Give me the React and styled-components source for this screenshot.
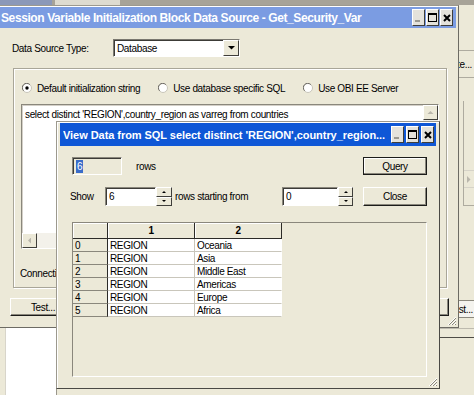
import React from 'react'
import styled, { createGlobalStyle } from 'styled-components'

const GlobalStyle = createGlobalStyle`
  html, body { margin: 0; padding: 0; }
  body {
    width: 474px;
    height: 395px;
    overflow: hidden;
    background: #ece9d8;
    font-family: "Liberation Sans", Arial, sans-serif;
    font-size: 10px;
    letter-spacing: -0.35px;
    color: #000;
  }
`

const Desktop = styled.div`
  position: relative;
  width: 474px;
  height: 395px;
  overflow: hidden;
  background: #ece9d8;
  display: flex;
  flex-direction: column;
`

/* ---------- background application ---------- */
const TopStrip = styled.div`
  flex: none;
  height: 5px;
  display: flex;
  gap: 3px;
  background: #a7a398;
`
const StripTab = styled.div`
  width: ${p => p.$w}px;
  background: ${p => p.$bg};
`
const BackBody = styled.div`
  flex: none;
  height: 323px;
  display: flex;
`
const Filler = styled.div`
  flex: 1;
`
const SidePanel = styled.div`
  width: 80px;
  display: flex;
  flex-direction: column;
`
const SideSection = styled.div`
  margin-top: 45px;
  height: 28px;
  box-sizing: border-box;
  border-top: 1px solid #aeab9f;
  border-bottom: 1px solid #aeab9f;
  padding-top: 7px;
  display: flex;
  justify-content: flex-end;
`
const SideText = styled.span`
  margin-right: 2px;
  line-height: 14px;
`
const SideList = styled.div`
  margin: 23px 0 0 69px;
  height: 105px;
  box-sizing: border-box;
  border-left: 1px solid #aeab9f;
  border-bottom: 1px solid #aeab9f;
  display: flex;
  flex-direction: column;
  justify-content: flex-end;
  padding-bottom: 17px;
`
const SideScroll = styled.div`
  height: 16px;
  border-top: 1px solid #d6d3c8;
  border-bottom: 1px solid #d6d3c8;
  display: flex;
  align-items: center;
  padding-left: 3px;
`
const SideButton = styled.div`
  margin: 94px 0 0 28px;
  height: 16px;
  border: 1px solid #8c897e;
  border-right: none;
  background: #f4f3ee;
  display: flex;
  align-items: center;
  justify-content: flex-end;
  padding-right: 1px;
`
const BackBottom = styled.div`
  flex: 1;
  display: flex;
`
const WhiteList = styled.div`
  margin-left: 5px;
  width: 50px;
  background: #fff;
  border-left: 1px solid #d8d5ca;
  border-right: 1px solid #9a978c;
`
const BottomRest = styled.div`
  flex: 1;
  border-top: 1px solid #bdbaae;
`
const BottomBand = styled.div`
  height: 8px;
  border-bottom: 1px solid #4e4c46;
`

/* ---------- windows ---------- */
const Window = styled.div`
  position: absolute;
  left: ${p => p.$x}px;
  top: ${p => p.$y}px;
  width: ${p => p.$w}px;
  height: ${p => p.$h}px;
  box-sizing: border-box;
  background: #ece9d8;
  border: 1px solid #9c998e;
  border-right-color: ${p => p.$edge};
  border-bottom-color: ${p => p.$edge};
  box-shadow: inset 1px 1px 0 #fff;
  padding: ${p => p.$pad};
  display: flex;
  flex-direction: column;
`
const TitleBar = styled.div`
  flex: none;
  height: ${p => p.$h}px;
  background: ${p => p.$bg};
  display: flex;
  align-items: center;
  padding: 0 ${p => p.$pr}px 0 ${p => p.$pl}px;
`
const TitleText = styled.div`
  flex: 1;
  min-width: 0;
  overflow: hidden;
  white-space: nowrap;
  color: #fff;
  font-weight: bold;
  font-size: ${p => p.$fs}px;
  letter-spacing: ${p => p.$ls}px;
`
const CaptionGroup = styled.div`
  display: flex;
  gap: ${p => p.$gap}px;
`
const CaptionButton = styled.div`
  width: 13px;
  height: 17px;
  box-sizing: border-box;
  background: #e4e2db;
  border: 1px solid #fff;
  border-right-color: #3f3e3a;
  border-bottom-color: #3f3e3a;
  display: flex;
  align-items: center;
  justify-content: center;
`
const Grip = styled.svg`
  position: absolute;
  right: 1px;
  bottom: 1px;
`

/* ---------- outer dialog body ---------- */
const DialogBody = styled.div`
  flex: 1;
  display: flex;
  flex-direction: column;
  padding: 11px 9px 0 15px;
`
const FieldRow = styled.div`
  display: flex;
  align-items: center;
  height: 18px;
`
const Label = styled.span`
  flex: none;
  width: ${p => (p.$w ? `${p.$w}px` : 'auto')};
  margin-left: ${p => p.$ml || 0}px;
  white-space: nowrap;
`
const Select = styled.div`
  width: 127px;
  height: 18px;
  box-sizing: border-box;
  background: #fff;
  border: 1px solid #7a7870;
  border-right-color: #fff;
  border-bottom-color: #fff;
  box-shadow: inset 1px 1px 0 #3c3b37;
  display: flex;
  align-items: center;
  padding: 0 0 0 3px;
`
const SelectValue = styled.span`
  flex: 1;
`
const Bevel = styled.div`
  flex: none;
  width: ${p => p.$w}px;
  height: ${p => p.$h}px;
  box-sizing: border-box;
  background: #ece9d8;
  border: 1px solid #fff;
  border-right-color: #3f3e3a;
  border-bottom-color: #3f3e3a;
  display: flex;
  align-items: center;
  justify-content: center;
`
const GroupBox = styled.div`
  margin: 11px 0 0 1px;
  height: 220px;
  box-sizing: border-box;
  border: 1px solid #a9a698;
  box-shadow: inset 1px 1px 0 #fff, 1px 1px 0 #fff;
  padding: 13px 7px 0 7px;
  display: flex;
  flex-direction: column;
`
const RadioRow = styled.div`
  display: flex;
  align-items: center;
  gap: 18px;
  height: 12px;
  margin-left: 1px;
`
const RadioItem = styled.label`
  display: flex;
  align-items: center;
  gap: 5px;
  white-space: nowrap;
`
const TextArea = styled.div`
  margin-top: 10px;
  height: 145px;
  box-sizing: border-box;
  background: #fff;
  border: 1px solid #8a877c;
  border-right-color: #fff;
  border-bottom-color: #fff;
  box-shadow: inset 1px 1px 0 #d4d0c8;
  display: grid;
  grid-template-columns: 1fr 15px;
  grid-template-rows: 1fr 15px;
`
const TextContent = styled.div`
  padding: 3px 3px;
  white-space: nowrap;
  overflow: hidden;
  line-height: 14px;
`
const VScroll = styled.div`
  background: #f3f1ea;
  display: flex;
  flex-direction: column;
`
const HScroll = styled.div`
  background: #f3f1ea;
  display: flex;
`
const ScrollCorner = styled.div`
  background: #ece9d8;
`
const ConnRow = styled.div`
  margin: 16px 0 0 -1px;
  display: flex;
  align-items: center;
  height: 16px;
`
const ButtonRow = styled.div`
  margin: 10px -2px 0 -2px;
  display: flex;
  justify-content: space-between;
`
const PushButton = styled.div`
  width: ${p => p.$w}px;
  height: ${p => p.$h || 18}px;
  box-sizing: border-box;
  background: #ece9d8;
  border: 1px solid ${p => (p.$default ? '#1c1c1a' : '#fff')};
  border-right-color: #1c1c1a;
  border-bottom-color: #1c1c1a;
  box-shadow: ${p => (p.$default ? 'inset -1px -1px 0 #8a877c, inset 1px 1px 0 #fff' : 'inset -1px -1px 0 #8a877c')};
  display: flex;
  align-items: center;
  justify-content: center;
  margin-left: ${p => p.$ml || 0}px;
`
const ButtonPair = styled.div`
  display: flex;
  gap: 6px;
`

/* ---------- inner dialog ---------- */
const InnerBody = styled.div`
  flex: 1;
  display: flex;
  flex-direction: column;
  padding: 11px 9px 0 12px;
`
const InnerRow = styled.div`
  display: flex;
  align-items: center;
  height: ${p => p.$h}px;
  margin-top: ${p => p.$mt || 0}px;
`
const Field = styled.div`
  flex: none;
  width: ${p => p.$w}px;
  height: ${p => p.$h}px;
  box-sizing: border-box;
  background: ${p => (p.$readonly ? '#ece9d8' : '#fff')};
  border: 1px solid #8a877c;
  border-right-color: #fff;
  border-bottom-color: #fff;
  box-shadow: inset 1px 1px 0 #3c3b37;
  display: flex;
  align-items: center;
  padding-left: 3px;
`
const Selected = styled.span`
  background: #3a6cc9;
  color: #fff;
  padding: 0 1px;
  line-height: 13px;
`
const Spin = styled.div`
  display: flex;
  flex-direction: column;
  width: ${p => p.$w}px;
  height: 19px;
`
const SpinHalf = styled.div`
  flex: 1;
  box-sizing: border-box;
  background: #ece9d8;
  border: 1px solid #fff;
  border-right-color: #3f3e3a;
  border-bottom-color: #3f3e3a;
  display: flex;
  align-items: center;
  justify-content: center;
`
const Spacer = styled.div`
  flex: 1;
`
const TablePane = styled.div`
  margin-top: 16px;
  height: 155px;
  box-sizing: border-box;
  border: 1px solid #8a877c;
  border-right-color: #fff;
  border-bottom-color: #fff;
`
const Grid = styled.div`
  display: grid;
  grid-template-columns: 35px 87px 87px;
  grid-template-rows: 16px repeat(6, 13px);
`
const HeadCell = styled.div`
  box-sizing: border-box;
  background: #ece9d8;
  border-right: 1px solid #2c2b28;
  border-bottom: 1px solid #2c2b28;
  box-shadow: inset 1px 1px 0 #fff;
  font-weight: bold;
  display: flex;
  align-items: center;
  justify-content: center;
`
const RowHead = styled.div`
  box-sizing: border-box;
  background: #ece9d8;
  border-right: 1px solid #2c2b28;
  border-bottom: 1px solid #8a877c;
  padding-left: 2px;
  display: flex;
  align-items: center;
`
const Cell = styled.div`
  box-sizing: border-box;
  background: #fff;
  border-right: 1px solid ${p => (p.$last ? '#fff' : '#c9c6bb')};
  border-bottom: 1px solid #c9c6bb;
  padding-left: 2px;
  display: flex;
  align-items: center;
  white-space: nowrap;
`

/* ---------- drawings ---------- */
const MinGlyph = ({ color }) => (
  <svg width="7" height="9" viewBox="0 0 7 9"><rect x="0" y="7" width="5" height="2" fill={color} /></svg>
)
const MaxGlyph = () => (
  <svg width="9" height="9" viewBox="0 0 9 9"><rect x="0.5" y="0.5" width="8" height="8" fill="none" stroke="#000" /><rect x="0" y="0" width="9" height="2" fill="#000" /></svg>
)
const CloseGlyph = () => (
  <svg width="8" height="8" viewBox="0 0 8 8"><path d="M1 1 L7 7 M7 1 L1 7" stroke="#000" strokeWidth="2" /></svg>
)
const Tri = ({ dir, size = 7, color = '#000' }) => {
  const s = size
  const pts = {
    down: `0,0 ${s},0 ${s / 2},${s / 2}`,
    up: `0,${s / 2} ${s},${s / 2} ${s / 2},0`,
    left: `${s / 2},0 ${s / 2},${s} 0,${s / 2}`,
    right: `0,0 0,${s} ${s / 2},${s / 2}`,
  }[dir]
  const w = dir === 'left' || dir === 'right' ? s / 2 : s
  const h = dir === 'left' || dir === 'right' ? s : s / 2
  return <svg width={w} height={h} viewBox={`0 0 ${w} ${h}`}><polygon points={pts} fill={color} /></svg>
}
const Radio = ({ checked }) => (
  <svg width="10" height="10" viewBox="0 0 10 10">
    <circle cx="5" cy="5" r="4.5" fill="#fff" stroke="#c8c5ba" />
    <path d="M1.6 7.8 A4.3 4.3 0 0 1 7.8 1.6" fill="none" stroke="#6e6c66" strokeWidth="1" />
    {checked && <circle cx="5" cy="5" r="1.7" fill="#000" />}
  </svg>
)
const GripLines = () => (
  <>
    <path d="M10 2 L2 10 M10 5 L5 10 M10 8 L8 10" stroke="#fff" strokeWidth="1" />
    <path d="M10 3 L3 10 M10 6 L6 10 M10 9 L9 10" stroke="#8a877c" strokeWidth="1" />
  </>
)

const Captions = ({ gap }) => (
  <CaptionGroup $gap={gap}>
    <CaptionButton><MinGlyph color="#9a988f" /></CaptionButton>
    <CaptionButton><MaxGlyph /></CaptionButton>
    <CaptionButton><CloseGlyph /></CaptionButton>
  </CaptionGroup>
)

const rows = [
  ['0', 'REGION', 'Oceania'],
  ['1', 'REGION', 'Asia'],
  ['2', 'REGION', 'Middle East'],
  ['3', 'REGION', 'Americas'],
  ['4', 'REGION', 'Europe'],
  ['5', 'REGION', 'Africa'],
]

export default function App() {
  return (
    <Desktop>
      <GlobalStyle />
      <TopStrip>
        <StripTab $w={52} $bg="#8b98b8" />
        <StripTab $w={65} $bg="#dedbd0" />
      </TopStrip>
      <BackBody>
        <Filler />
        <SidePanel>
          <SideSection><SideText>Delete...</SideText></SideSection>
          <SideList>
            <SideScroll><Tri dir="right" size={7} color="#b9b6ab" /></SideScroll>
          </SideList>
          <SideButton>Test...</SideButton>
        </SidePanel>
      </BackBody>
      <BackBottom>
        <WhiteList />
        <BottomRest><BottomBand /></BottomRest>
      </BackBottom>

      <Window $x={-6} $y={5} $w={465} $h={323} $edge="#6d6b64" $pad="1px 2px 2px 2px">
        <TitleBar $h={21} $bg="#7b9ce2" $pl={4} $pr={3}>
          <TitleText $fs={12} $ls={-0.4}>Session Variable Initialization Block Data Source - Get_Security_Var</TitleText>
          <Captions gap={1} />
        </TitleBar>
        <DialogBody>
          <FieldRow>
            <Label $w={101}>Data Source Type:</Label>
            <Select>
              <SelectValue>Database</SelectValue>
              <Bevel $w={16} $h={16}><Tri dir="down" size={7} /></Bevel>
            </Select>
          </FieldRow>
          <GroupBox>
            <RadioRow>
              <RadioItem><Radio checked />Default initialization string</RadioItem>
              <RadioItem><Radio />Use database specific SQL</RadioItem>
              <RadioItem><Radio />Use OBI EE Server</RadioItem>
            </RadioRow>
            <TextArea>
              <TextContent>select distinct 'REGION',country_region as varreg from countries</TextContent>
              <VScroll>
                <Bevel $w={15} $h={15}><Tri dir="up" size={7} color="#b9b6ab" /></Bevel>
              </VScroll>
              <HScroll>
                <Bevel $w={15} $h={15}><Tri dir="left" size={7} color="#b9b6ab" /></Bevel>
              </HScroll>
              <ScrollCorner />
            </TextArea>
            <ConnRow>
              <Label $w={93}>Connection Pool:</Label>
              <Field $w={200} $h={18} />
            </ConnRow>
          </GroupBox>
          <ButtonRow>
            <PushButton $w={66}>Test...</PushButton>
            <ButtonPair>
              <PushButton $w={75}>OK</PushButton>
              <PushButton $w={75}>Cancel</PushButton>
            </ButtonPair>
          </ButtonRow>
        </DialogBody>
        <Grip width="11" height="11" viewBox="0 0 11 11"><GripLines /></Grip>
      </Window>

      <Window $x={56} $y={121} $w={384} $h={268} $edge="#4a4944" $pad="1px 3px 3px 3px">
        <TitleBar $h={23} $bg="#0f57d6" $pl={3} $pr={2}>
          <TitleText $fs={11} $ls={-0.05}>View Data from SQL select distinct 'REGION',country_region...</TitleText>
          <Captions gap={2} />
        </TitleBar>
        <InnerBody>
          <InnerRow $h={18}>
            <Field $w={50} $h={18} $readonly><Selected>6</Selected></Field>
            <Label $ml={14}>rows</Label>
            <Spacer />
            <PushButton $w={64} $default>Query</PushButton>
          </InnerRow>
          <InnerRow $h={19} $mt={12}>
            <Label $w={35} $ml={-2}>Show</Label>
            <Field $w={51} $h={19}>6</Field>
            <Spin $w={16}>
              <SpinHalf><Tri dir="up" size={4} /></SpinHalf>
              <SpinHalf><Tri dir="down" size={4} /></SpinHalf>
            </Spin>
            <Label $w={107} $ml={3}>rows starting from</Label>
            <Field $w={56} $h={19}>0</Field>
            <Spin $w={15}>
              <SpinHalf><Tri dir="up" size={4} /></SpinHalf>
              <SpinHalf><Tri dir="down" size={4} /></SpinHalf>
            </Spin>
            <Spacer />
            <PushButton $w={64} $h={19}>Close</PushButton>
          </InnerRow>
          <TablePane>
            <Grid>
              <HeadCell />
              <HeadCell>1</HeadCell>
              <HeadCell>2</HeadCell>
              {rows.map(r => (
                <React.Fragment key={r[0]}>
                  <RowHead>{r[0]}</RowHead>
                  <Cell>{r[1]}</Cell>
                  <Cell $last>{r[2]}</Cell>
                </React.Fragment>
              ))}
            </Grid>
          </TablePane>
        </InnerBody>
        <Grip width="11" height="11" viewBox="0 0 11 11"><GripLines /></Grip>
      </Window>
    </Desktop>
  )
}
